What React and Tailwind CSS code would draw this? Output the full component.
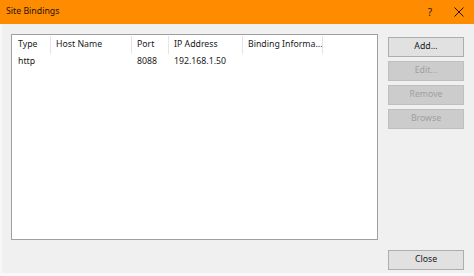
export default function App() {
  const font = { fontFamily: '"Segoe UI", "Noto Sans", "Open Sans", sans-serif' };
  const cols = [
    { label: "Type", w: 38 },
    { label: "Host Name", w: 81 },
    { label: "Port", w: 37 },
    { label: "IP Address", w: 74 },
    { label: "Binding Informa...", w: 80 },
  ];
  const row = ["http", "", "8088", "192.168.1.50", ""];
  return (
    <div className="w-[474px] h-[276px] bg-[#f0f0f0] flex flex-col text-[8.75px] text-[#1a1a1a] overflow-hidden whitespace-nowrap" style={font}>
      <div className="h-[24px] bg-[#ff8c00] flex items-center pl-[6px] shrink-0">
        <span className="flex-1 text-[8.75px] text-[#1f1300]">Site Bindings</span>
        <span className="w-[16px] text-center mr-[16px] text-[10px]">?</span>
        <svg width="10" height="10" viewBox="0 0 10 10" className="mr-[10px]">
          <path d="M0.5 0.5 L9.5 9.5 M9.5 0.5 L0.5 9.5" stroke="#1f1300" strokeWidth="1" />
        </svg>
      </div>
      <div className="flex-1 flex border-l-[2px] border-[#f7f7f7] border-b-[3px] border-b-[#f8f8f8]">
        <div className="flex flex-col pl-[9px] pt-[10px]">
          <div className="w-[367px] h-[206px] bg-white border border-[#a0a0a0] pl-[1px]">
            <div className="flex h-[20px] items-center">
              {cols.map((c) => (
                <div key={c.label} className="h-[18px] flex items-center pl-[5px] border-r border-[#e5e5e5] text-[#1a1a1a] overflow-hidden" style={{ width: c.w }}>
                  {c.label}
                </div>
              ))}
            </div>
            <div className="flex h-[14px] items-center">
              {row.map((v, i) => (
                <div key={i} className="pl-[5px]" style={{ width: cols[i].w }}>
                  {v}
                </div>
              ))}
            </div>
          </div>
          <div className="flex-1" />
        </div>
        <div className="flex-1 flex flex-col items-end pr-[10px] pt-[13px] pb-[3px]">
          <button className="w-[76px] h-[20px] bg-[#e1e1e1] border border-[#adadad] text-[#1a1a1a]">Add...</button>
          <button className="mt-[4px] w-[76px] h-[20px] bg-[#cccccc] border border-[#bfbfbf] text-[#a0a0a0]">Edit...</button>
          <button className="mt-[4px] w-[76px] h-[20px] bg-[#cccccc] border border-[#bfbfbf] text-[#a0a0a0]">Remove</button>
          <button className="mt-[4px] w-[76px] h-[20px] bg-[#cccccc] border border-[#bfbfbf] text-[#a0a0a0]">Browse</button>
          <div className="flex-1" />
          <button className="w-[76px] h-[20px] bg-[#e1e1e1] border border-[#adadad] text-[#1a1a1a]">Close</button>
        </div>
      </div>
    </div>
  );
}
